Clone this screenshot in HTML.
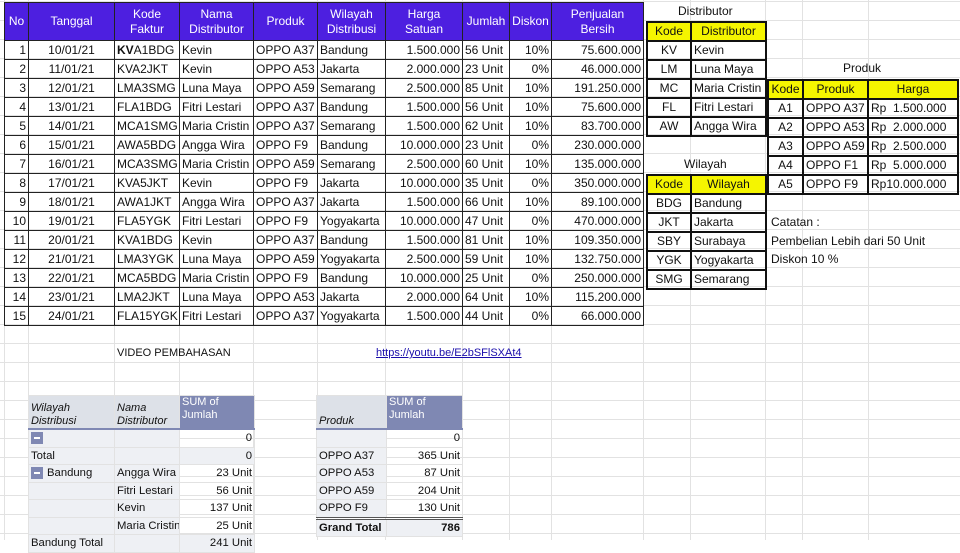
<!DOCTYPE html>
<html><head><meta charset="utf-8"><style>
body{margin:0;width:960px;height:540px;overflow:hidden;background:#fff;position:relative;font-family:"Liberation Sans",sans-serif;font-size:12px;color:#111}
.grid{position:absolute;left:0;top:0;width:960px;height:540px;background:repeating-linear-gradient(to bottom,transparent 0,transparent 1px,#e2e2e2 1px,#e2e2e2 2px,transparent 2px,transparent 19px)}
.v{position:absolute;top:0;height:540px;width:1px;background:#e2e2e2}
table{position:absolute;border-collapse:collapse;table-layout:fixed}
td{padding:0 2px;white-space:nowrap;overflow:hidden;height:18px;line-height:18px}
.m td{border:1px solid #222}
.m tr.h td{background:#4d1fe0;color:#fff;text-align:center;line-height:15px;height:37px;white-space:normal;border-color:#222}
.r{text-align:right}.c{text-align:center}
.y td{border:2px solid #111;height:17px;line-height:17px}
.y tr.h td{background:#f5f500;text-align:center}
.t{position:absolute;white-space:nowrap}
.p td{border:1px solid #e2e2e2;height:16.5px;line-height:16.5px;font-size:11.3px}
.p tr.h td{background:#dde1e8;font-style:italic;height:32px;line-height:13px;vertical-align:bottom;white-space:normal;border-bottom:2px solid #7f88b3;font-size:11px}
.p tr.h td.s{background:#7f88b3;color:#fff;font-style:normal;vertical-align:top}
.g{background:#eef0f4}
.mn{display:inline-block;width:12px;height:12px;background:#7f88b3;vertical-align:middle;position:relative;margin-right:4px}
.mn:after{content:"";position:absolute;left:3px;top:5px;width:6px;height:2px;background:#fff}
</style></head><body>
<div class="grid"></div>
<div class="v" style="left:4px"></div><div class="v" style="left:28px"></div><div class="v" style="left:114px"></div><div class="v" style="left:179px"></div><div class="v" style="left:253px"></div><div class="v" style="left:317px"></div><div class="v" style="left:385px"></div><div class="v" style="left:462px"></div><div class="v" style="left:509px"></div><div class="v" style="left:551px"></div><div class="v" style="left:643px"></div><div class="v" style="left:690px"></div><div class="v" style="left:765px"></div><div class="v" style="left:802px"></div><div class="v" style="left:868px"></div>

<table class="m" style="left:4px;top:2px;width:639px">
<colgroup><col style="width:24px"><col style="width:86px"><col style="width:65px"><col style="width:74px"><col style="width:64px"><col style="width:68px"><col style="width:77px"><col style="width:47px"><col style="width:42px"><col style="width:92px"></colgroup>
<tr class="h"><td>No</td><td>Tanggal</td><td>Kode Faktur</td><td>Nama Distributor</td><td>Produk</td><td>Wilayah Distribusi</td><td>Harga Satuan</td><td>Jumlah</td><td>Diskon</td><td>Penjualan Bersih</td></tr>
<tr><td class="r">1</td><td class="c">10/01/21</td><td><b>KV</b>A1BDG</td><td>Kevin</td><td>OPPO A37</td><td>Bandung</td><td class="r">1.500.000</td><td>56 Unit</td><td class="r">10%</td><td class="r">75.600.000</td></tr>
<tr><td class="r">2</td><td class="c">11/01/21</td><td>KVA2JKT</td><td>Kevin</td><td>OPPO A53</td><td>Jakarta</td><td class="r">2.000.000</td><td>23 Unit</td><td class="r">0%</td><td class="r">46.000.000</td></tr>
<tr><td class="r">3</td><td class="c">12/01/21</td><td>LMA3SMG</td><td>Luna Maya</td><td>OPPO A59</td><td>Semarang</td><td class="r">2.500.000</td><td>85 Unit</td><td class="r">10%</td><td class="r">191.250.000</td></tr>
<tr><td class="r">4</td><td class="c">13/01/21</td><td>FLA1BDG</td><td>Fitri Lestari</td><td>OPPO A37</td><td>Bandung</td><td class="r">1.500.000</td><td>56 Unit</td><td class="r">10%</td><td class="r">75.600.000</td></tr>
<tr><td class="r">5</td><td class="c">14/01/21</td><td>MCA1SMG</td><td>Maria Cristin</td><td>OPPO A37</td><td>Semarang</td><td class="r">1.500.000</td><td>62 Unit</td><td class="r">10%</td><td class="r">83.700.000</td></tr>
<tr><td class="r">6</td><td class="c">15/01/21</td><td>AWA5BDG</td><td>Angga Wira</td><td>OPPO F9</td><td>Bandung</td><td class="r">10.000.000</td><td>23 Unit</td><td class="r">0%</td><td class="r">230.000.000</td></tr>
<tr><td class="r">7</td><td class="c">16/01/21</td><td>MCA3SMG</td><td>Maria Cristin</td><td>OPPO A59</td><td>Semarang</td><td class="r">2.500.000</td><td>60 Unit</td><td class="r">10%</td><td class="r">135.000.000</td></tr>
<tr><td class="r">8</td><td class="c">17/01/21</td><td>KVA5JKT</td><td>Kevin</td><td>OPPO F9</td><td>Jakarta</td><td class="r">10.000.000</td><td>35 Unit</td><td class="r">0%</td><td class="r">350.000.000</td></tr>
<tr><td class="r">9</td><td class="c">18/01/21</td><td>AWA1JKT</td><td>Angga Wira</td><td>OPPO A37</td><td>Jakarta</td><td class="r">1.500.000</td><td>66 Unit</td><td class="r">10%</td><td class="r">89.100.000</td></tr>
<tr><td class="r">10</td><td class="c">19/01/21</td><td>FLA5YGK</td><td>Fitri Lestari</td><td>OPPO F9</td><td>Yogyakarta</td><td class="r">10.000.000</td><td>47 Unit</td><td class="r">0%</td><td class="r">470.000.000</td></tr>
<tr><td class="r">11</td><td class="c">20/01/21</td><td>KVA1BDG</td><td>Kevin</td><td>OPPO A37</td><td>Bandung</td><td class="r">1.500.000</td><td>81 Unit</td><td class="r">10%</td><td class="r">109.350.000</td></tr>
<tr><td class="r">12</td><td class="c">21/01/21</td><td>LMA3YGK</td><td>Luna Maya</td><td>OPPO A59</td><td>Yogyakarta</td><td class="r">2.500.000</td><td>59 Unit</td><td class="r">10%</td><td class="r">132.750.000</td></tr>
<tr><td class="r">13</td><td class="c">22/01/21</td><td>MCA5BDG</td><td>Maria Cristin</td><td>OPPO F9</td><td>Bandung</td><td class="r">10.000.000</td><td>25 Unit</td><td class="r">0%</td><td class="r">250.000.000</td></tr>
<tr><td class="r">14</td><td class="c">23/01/21</td><td>LMA2JKT</td><td>Luna Maya</td><td>OPPO A53</td><td>Jakarta</td><td class="r">2.000.000</td><td>64 Unit</td><td class="r">10%</td><td class="r">115.200.000</td></tr>
<tr><td class="r">15</td><td class="c">24/01/21</td><td>FLA15YGK</td><td>Fitri Lestari</td><td>OPPO A37</td><td>Yogyakarta</td><td class="r">1.500.000</td><td>44 Unit</td><td class="r">0%</td><td class="r">66.000.000</td></tr>
</table>

<div class="t" style="left:678px;top:4px">Distributor</div>
<table class="y" style="left:646px;top:21px;width:119px">
<colgroup><col style="width:44px"><col style="width:75px"></colgroup>
<tr class="h"><td>Kode</td><td>Distributor</td></tr>
<tr><td class="c">KV</td><td>Kevin</td></tr><tr><td class="c">LM</td><td>Luna Maya</td></tr><tr><td class="c">MC</td><td>Maria Cristin</td></tr><tr><td class="c">FL</td><td>Fitri Lestari</td></tr><tr><td class="c">AW</td><td>Angga Wira</td></tr>
</table>
<div class="t" style="left:684px;top:157px">Wilayah</div>
<table class="y" style="left:646px;top:174px;width:119px">
<colgroup><col style="width:44px"><col style="width:75px"></colgroup>
<tr class="h"><td>Kode</td><td>Wilayah</td></tr>
<tr><td class="c">BDG</td><td>Bandung</td></tr><tr><td class="c">JKT</td><td>Jakarta</td></tr><tr><td class="c">SBY</td><td>Surabaya</td></tr><tr><td class="c">YGK</td><td>Yogyakarta</td></tr><tr><td class="c">SMG</td><td>Semarang</td></tr>
</table>
<div class="t" style="left:843px;top:61px">Produk</div>
<table class="y" style="left:767px;top:79px;width:190px">
<colgroup><col style="width:35px"><col style="width:65px"><col style="width:90px"></colgroup>
<tr class="h"><td>Kode</td><td>Produk</td><td>Harga</td></tr>
<tr><td class="c">A1</td><td>OPPO A37</td><td>Rp&nbsp; 1.500.000</td></tr>
<tr><td class="c">A2</td><td>OPPO A53</td><td>Rp&nbsp; 2.000.000</td></tr>
<tr><td class="c">A3</td><td>OPPO A59</td><td>Rp&nbsp; 2.500.000</td></tr>
<tr><td class="c">A4</td><td>OPPO F1</td><td>Rp&nbsp; 5.000.000</td></tr>
<tr><td class="c">A5</td><td>OPPO F9</td><td>Rp10.000.000</td></tr>
</table>
<div class="t" style="left:771px;top:215px">Catatan :</div>
<div class="t" style="left:771px;top:234px">Pembelian Lebih dari 50 Unit</div>
<div class="t" style="left:771px;top:252px">Diskon 10 %</div>

<div class="t" style="left:117px;top:347px;font-size:11px">VIDEO PEMBAHASAN</div>
<div class="t" style="left:376px;top:347px;font-size:11px;color:#1a0dab;text-decoration:underline">https://youtu.be/E2bSFlSXAt4</div>

<table class="p" style="left:28px;top:395px;width:226px">
<colgroup><col style="width:86px"><col style="width:65px"><col style="width:75px"></colgroup>
<tr class="h"><td>Wilayah Distribusi</td><td>Nama Distributor</td><td class="s">SUM of Jumlah</td></tr>
<tr><td class="g"><span class="mn"></span></td><td class="g"></td><td class="r">0</td></tr>
<tr><td class="g">Total</td><td class="g"></td><td class="r g">0</td></tr>
<tr><td class="g"><span class="mn"></span>Bandung</td><td class="g">Angga Wira</td><td class="r">23 Unit</td></tr>
<tr><td class="g"></td><td class="g">Fitri Lestari</td><td class="r">56 Unit</td></tr>
<tr><td class="g"></td><td class="g">Kevin</td><td class="r">137 Unit</td></tr>
<tr><td class="g"></td><td class="g">Maria Cristin</td><td class="r">25 Unit</td></tr>
<tr><td class="g">Bandung Total</td><td class="g"></td><td class="r g">241 Unit</td></tr>
</table>
<table class="p" style="left:316px;top:395px;width:146px">
<colgroup><col style="width:70px"><col style="width:76px"></colgroup>
<tr class="h"><td>Produk</td><td class="s">SUM of Jumlah</td></tr>
<tr><td class="g"></td><td class="r">0</td></tr>
<tr><td class="g">OPPO A37</td><td class="r">365 Unit</td></tr>
<tr><td class="g">OPPO A53</td><td class="r">87 Unit</td></tr>
<tr><td class="g">OPPO A59</td><td class="r">204 Unit</td></tr>
<tr><td class="g">OPPO F9</td><td class="r">130 Unit</td></tr>
<tr><td class="g" style="border-top:3px double #555;font-weight:bold">Grand Total</td><td class="r g" style="border-top:3px double #555;font-weight:bold">786</td></tr>
</table>
</body></html>
